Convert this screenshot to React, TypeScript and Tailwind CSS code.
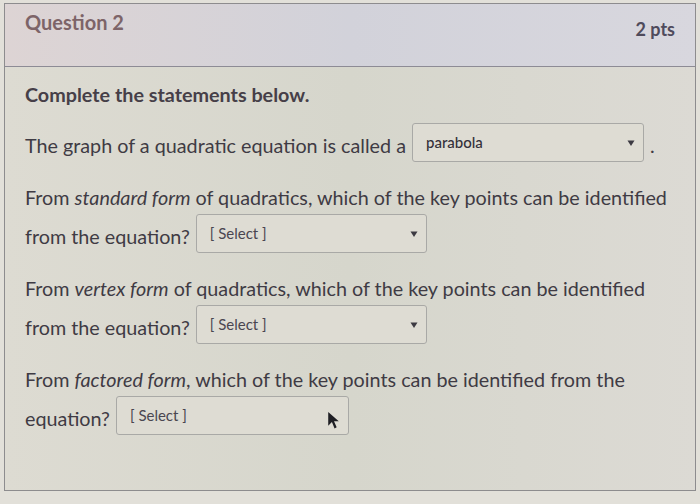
import type { ReactNode } from 'react'

function Dropdown({ value, width, cursor, chosen }: { value: string; width: string; cursor?: boolean; chosen?: boolean }) {
  return (
    <span
      className={`ml-[6px] -mt-[6px] flex h-[39px] shrink-0 items-center justify-between rounded-[3px] border border-[#a9a9a6] bg-[#dedcd3] pl-[13px] pr-[8px] ${width}`}
    >
      <span className={`text-[15px] leading-none ${chosen ? 'font-medium text-[#34303a]' : 'text-[#4a4650]'}`}>{value}</span>
      {cursor ? (
        <svg width="13" height="19" viewBox="0 0 12 18" className="mt-[10px]">
          <path d="M1 1 L1 14 L4.5 10.5 L7 16.5 L9 15.5 L6.5 9.8 L11 9.8 Z" fill="#1f1f24" />
        </svg>
      ) : (
        <svg width="8" height="8" viewBox="0 0 8 8">
          <path d="M0.5 1.5 L7.5 1.5 L4 7 Z" fill="#3c3a42" />
        </svg>
      )}
    </span>
  )
}

function Line({ children }: { children: ReactNode }) {
  return <div className="flex h-[39px] items-center whitespace-nowrap">{children}</div>
}

export default function App() {
  return (
    <div className="h-[504px] w-[700px] overflow-hidden bg-[#e2e0d9] pt-[3px] font-['Lato','Noto_Sans',sans-serif]">
      <div className="mx-[4px] h-[488px] border border-[#8d8c8e] bg-gradient-to-r from-[#dddbd2] via-[#d6d6cc] to-[#dcdad4]">
        <div className="flex h-[63px] items-start justify-between border-b border-[#8d8b95] bg-gradient-to-r from-[#ddd4d4] via-[#d2d2da] to-[#d8d7de] px-[20px] pt-[6px]">
          <h2 className="text-[20px] font-bold leading-[24px] text-[#7d6468]">Question 2</h2>
          <span className="pt-[7px] text-[18px] font-bold leading-[24px] text-[#4f4b5c]">2 pts</span>
        </div>
        <div className="px-[20px] pt-[8px] text-[19.75px] text-[#3f3b44]">
          <div className="flex h-[40px] items-center font-bold text-[#463f48]">Complete the statements below.</div>
          <div className="mt-[11px] flex flex-col gap-[13px]">
            <Line>
              The graph of a quadratic equation is called a
              <Dropdown value="parabola" width="w-[232px]" chosen />
              <span className="ml-[6px]">.</span>
            </Line>
            <div>
              <Line>
                <span>
                  From <i>standard form</i> of quadratics, which of the key points can be identified
                </span>
              </Line>
              <Line>
                from the equation?
                <Dropdown value="[ Select ]" width="w-[231px]" />
              </Line>
            </div>
            <div>
              <Line>
                <span>
                  From <i>vertex form</i> of quadratics, which of the key points can be identified
                </span>
              </Line>
              <Line>
                from the equation?
                <Dropdown value="[ Select ]" width="w-[231px]" />
              </Line>
            </div>
            <div>
              <Line>
                <span>
                  From <i>factored form</i>, which of the key points can be identified from the
                </span>
              </Line>
              <Line>
                equation?
                <Dropdown value="[ Select ]" width="w-[233px]" cursor />
              </Line>
            </div>
          </div>
        </div>
      </div>
    </div>
  )
}
